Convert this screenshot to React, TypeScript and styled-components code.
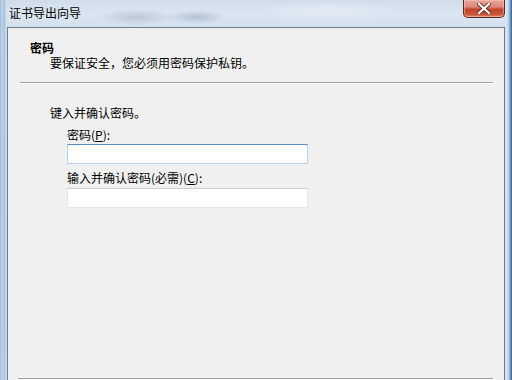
import React, { FC } from 'react';
import styled, { createGlobalStyle } from 'styled-components';

const GlobalStyle = createGlobalStyle`
  html, body {
    margin: 0;
    padding: 0;
    overflow: hidden;
    background: #c9d8e8;
  }
  * {
    box-sizing: border-box;
  }
`;

const Window = styled.div`
  display: flex;
  flex-direction: column;
  width: 512px;
  height: 381px;
  padding: 0 7px 0 7px;
  font-family: "Noto Sans CJK SC", "Noto Sans", sans-serif;
  font-size: 12px;
  color: #000;
  background:
    linear-gradient(to right, #9fb8d6 0px, #c3d5ea 2px, #a9c1de 4px, #c8d9ec 6px, transparent 7px),
    linear-gradient(to left, #2c5f86 0px, #7fa6c8 2px, #c9dcee 4px, #d8e6f3 6px, transparent 7px),
    linear-gradient(to bottom, #cfdcea 0px, #dbe6f1 14px, #d3e0ed 27px, #c4d6e9 100%);
`;

const TitleBar = styled.div`
  display: flex;
  align-items: flex-start;
  justify-content: space-between;
  height: 27px;
  background:
    radial-gradient(ellipse 40px 8px at 130px 17px, rgba(150, 165, 185, 0.45), transparent),
    radial-gradient(ellipse 30px 7px at 190px 17px, rgba(130, 150, 175, 0.45), transparent),
    radial-gradient(ellipse 70px 10px at 320px 10px, rgba(235, 242, 250, 0.6), transparent);
`;

const Title = styled.span`
  padding: 6px 0 0 2px;
  line-height: 14px;
  color: #000;
`;

const CloseButton = styled.div`
  display: flex;
  align-items: center;
  justify-content: center;
  width: 42px;
  height: 18px;
  margin-right: 0;
  border: 1px solid #5d2a22;
  border-top: none;
  border-radius: 0 0 5px 5px;
  background: linear-gradient(to bottom, #e6a598 0%, #d98a79 40%, #c2432c 55%, #c8553c 85%, #e08e6a 100%);
  box-shadow: inset 0 0 0 1px rgba(255, 210, 200, 0.45);
`;

const Panel = styled.div`
  flex: 1;
  display: flex;
  flex-direction: column;
  background: #f0f0f0;
  border: 1px solid #6c7d90;
`;

const Header = styled.div`
  display: flex;
  flex-direction: column;
  padding: 13px 0 0 22px;
`;

const HeaderTitle = styled.div`
  font-weight: bold;
  line-height: 14px;
`;

const HeaderText = styled.div`
  margin-top: 1px;
  padding-left: 20px;
  line-height: 14px;
`;

const Separator = styled.div<{ $top: number; $left: number }>`
  height: 2px;
  margin: ${p => p.$top}px 11px 0 ${p => p.$left}px;
  border-top: 1px solid #a0a0a0;
  border-bottom: 1px solid #ffffff;
`;

const Content = styled.div`
  flex: 1;
  display: flex;
  flex-direction: column;
  padding: 22px 0 0 42px;
`;

const Intro = styled.div`
  line-height: 14px;
`;

const Fields = styled.div`
  display: flex;
  flex-direction: column;
  padding-left: 17px;
`;

const Label = styled.label<{ $top: number }>`
  margin-top: ${p => p.$top}px;
  line-height: 14px;
`;

const Input = styled.input<{ $focused?: boolean }>`
  width: 241px;
  height: 20px;
  margin-top: ${p => (p.$focused ? 2 : 3)}px;
  padding: 0 3px;
  background: #fff;
  outline: none;
  font: inherit;
  border: 1px solid ${p => (p.$focused ? '#b6d1ec' : '#e6e6e6')};
  border-top-color: ${p => (p.$focused ? '#5a8cc0' : '#cfcfcf')};
`;

const App: FC = () => (
  <>
    <GlobalStyle />
    <Window>
      <TitleBar>
        <Title>证书导出向导</Title>
        <CloseButton>
          <svg width="14" height="11" viewBox="0 0 14 11">
            <path d="M2 1 L12 10 M12 1 L2 10" stroke="#6b2b20" strokeWidth="4" strokeLinecap="square" />
            <path d="M2 1 L12 10 M12 1 L2 10" stroke="#ffffff" strokeWidth="2.2" strokeLinecap="square" />
          </svg>
        </CloseButton>
      </TitleBar>
      <Panel>
        <Header>
          <HeaderTitle>密码</HeaderTitle>
          <HeaderText>要保证安全，您必须用密码保护私钥。</HeaderText>
        </Header>
        <Separator $top={12} $left={12} />
        <Content>
          <Intro>键入并确认密码。</Intro>
          <Fields>
            <Label $top={8}>密码(<u>P</u>):</Label>
            <Input $focused type="password" />
            <Label $top={7}>输入并确认密码(必需)(<u>C</u>):</Label>
            <Input type="password" />
          </Fields>
        </Content>
        <Separator $top={0} $left={10} />
      </Panel>
    </Window>
  </>
);

export default App;
